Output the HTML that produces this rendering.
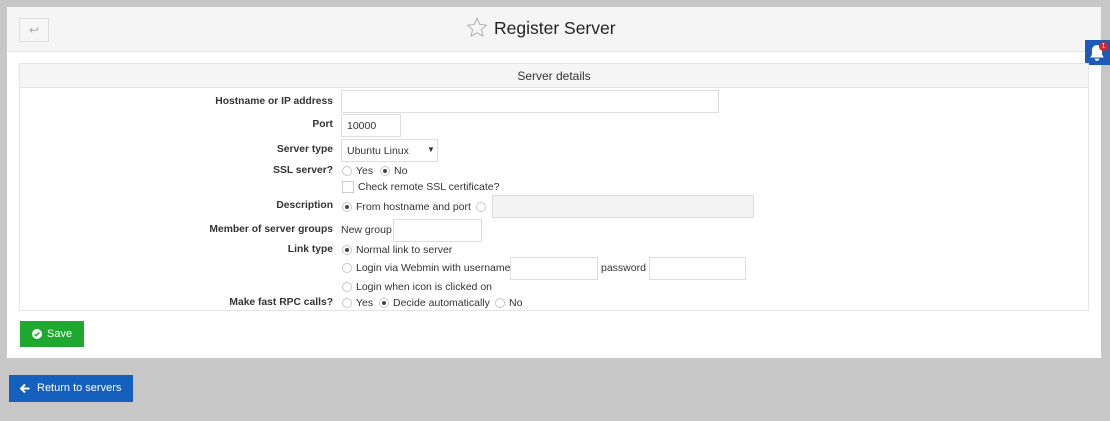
<!DOCTYPE html>
<html><head><meta charset="utf-8"><style>
*{box-sizing:border-box;margin:0;padding:0}
body{width:1110px;height:421px;background:#c6c7c6;font-family:"Liberation Sans",sans-serif;font-size:10.5px;color:#333;position:relative;overflow:hidden}
.a{position:absolute}
.panel{left:7px;top:7px;width:1094px;height:351px;background:#fff}
.hdr{left:7px;top:7px;width:1094px;height:45px;background:#f5f5f5;border-bottom:1px solid #e6e6e6}
.back{left:19px;top:18px;width:30px;height:24px;border:1px solid #ddd;background:#f6f6f6;color:#aaa;font-size:12px;text-align:center;line-height:22px}
.title{left:494px;top:18px;font-size:17.5px;color:#222;white-space:nowrap}
.box{left:19px;top:63px;width:1070px;height:248px;border:1px solid #e4e4e4}
.bh{left:19px;top:63px;width:1070px;height:25px;background:#f5f5f5;border:1px solid #e4e4e4;text-align:center;font-size:12px;line-height:24px;color:#333}
.lbl{right:777px;font-weight:bold;text-align:right;white-space:nowrap;font-size:10.3px}
.t{white-space:nowrap}
.in{border:1px solid #ddd;background:#fff;height:23px}
.rd{width:10px;height:10px;border:1px solid #c8c8c8;border-radius:50%;background:#fff}
.rd.on::after{content:"";position:absolute;left:2px;top:2px;width:4px;height:4px;border-radius:50%;background:#444}
.cb{width:12px;height:12px;border:1px solid #ccc;background:#fff}
.save{left:20px;top:321px;width:64px;height:26px;background:#1fa830;color:#fff;font-size:11px;line-height:26px}
.ret{left:9px;top:375px;width:124px;height:27px;background:#1560bd;color:#fff;font-size:11px;line-height:27px}
.bell{left:1085px;top:40px;width:25px;height:25px;background:#1e5ab8}
</style></head><body>
<div class="a panel"></div>
<div class="a hdr"></div>
<div class="a back">↩</div>
<svg class="a" style="left:466px;top:17px" width="22" height="22" viewBox="0 0 24 24"><path d="M12 1.5l3.1 6.6 7.1.8-5.3 4.8 1.5 7.1L12 17.2l-6.4 3.6 1.5-7.1-5.3-4.8 7.1-.8z" fill="none" stroke="#aaa" stroke-width="1"/></svg>
<div class="a title">Register Server</div>
<div class="a bell"><svg class="a" style="left:4px;top:4px" width="16" height="18" viewBox="0 0 14 16"><path d="M7 1c-3 0-4.5 2.2-4.5 5v3.5L1 12h12l-1.5-2.5V6C11.5 3.2 10 1 7 1z M5 13a2 2 0 0 0 4 0z" fill="#fff"/></svg><div class="a" style="left:14px;top:2px;width:9px;height:9px;border-radius:50%;background:#d9262c;color:#fff;font-size:7px;line-height:9px;text-align:center">1</div></div>
<div class="a box"></div>
<div class="a bh">Server details</div>

<div class="a lbl" style="top:96px">Hostname or IP address</div>
<div class="a in" style="left:341px;top:90px;width:378px"></div>

<div class="a lbl" style="top:119px">Port</div>
<div class="a in" style="left:341px;top:114px;width:60px"></div>
<div class="a t" style="left:347px;top:120px">10000</div>

<div class="a lbl" style="top:144px">Server type</div>
<div class="a in" style="left:341px;top:139px;width:97px"></div>
<div class="a t" style="left:347px;top:145px">Ubuntu Linux</div>
<div class="a t" style="left:427px;top:145px;font-size:8px">▼</div>

<div class="a lbl" style="top:165px">SSL server?</div>
<div class="a rd" style="left:342px;top:166px"></div><div class="a t" style="left:356px;top:165px">Yes</div>
<div class="a rd on" style="left:380px;top:166px"></div><div class="a t" style="left:394px;top:165px">No</div>
<div class="a cb" style="left:342px;top:181px"></div><div class="a t" style="left:358px;top:181px">Check remote SSL certificate?</div>

<div class="a lbl" style="top:200px">Description</div>
<div class="a rd on" style="left:342px;top:202px"></div><div class="a t" style="left:356px;top:201px">From hostname and port</div>
<div class="a rd" style="left:476px;top:202px"></div>
<div class="a in" style="left:492px;top:195px;width:262px;background:#f3f3f3"></div>

<div class="a lbl" style="top:224px">Member of server groups</div>
<div class="a t" style="left:341px;top:224px">New group</div>
<div class="a in" style="left:393px;top:219px;width:89px"></div>

<div class="a lbl" style="top:244px">Link type</div>
<div class="a rd on" style="left:342px;top:245px"></div><div class="a t" style="left:356px;top:244px">Normal link to server</div>
<div class="a rd" style="left:342px;top:263px"></div><div class="a t" style="left:356px;top:262px">Login via Webmin with username</div>
<div class="a in" style="left:510px;top:257px;width:88px"></div>
<div class="a t" style="left:601px;top:262px">password</div>
<div class="a in" style="left:649px;top:257px;width:97px"></div>
<div class="a rd" style="left:342px;top:282px"></div><div class="a t" style="left:356px;top:281px">Login when icon is clicked on</div>

<div class="a lbl" style="top:297px">Make fast RPC calls?</div>
<div class="a rd" style="left:342px;top:298px"></div><div class="a t" style="left:356px;top:297px">Yes</div>
<div class="a rd on" style="left:379px;top:298px"></div><div class="a t" style="left:393px;top:297px">Decide automatically</div>
<div class="a rd" style="left:495px;top:298px"></div><div class="a t" style="left:509px;top:297px">No</div>

<div class="a save"><svg class="a" style="left:12px;top:8px" width="10" height="10" viewBox="0 0 10 10"><circle cx="5" cy="5" r="5" fill="#fff"/><path d="M2.6 5.1l1.6 1.6 3.2-3.2" stroke="#1fa830" stroke-width="1.5" fill="none"/></svg><span class="a" style="left:27px">Save</span></div>
<div class="a ret"><svg class="a" style="left:11px;top:9px" width="10" height="9" viewBox="0 0 10 9"><path d="M5 0.5L1 4.5l4 4M1 4.5h8.5" stroke="#fff" stroke-width="2" fill="none"/></svg><span class="a" style="left:28px">Return to servers</span></div>
</body></html>
